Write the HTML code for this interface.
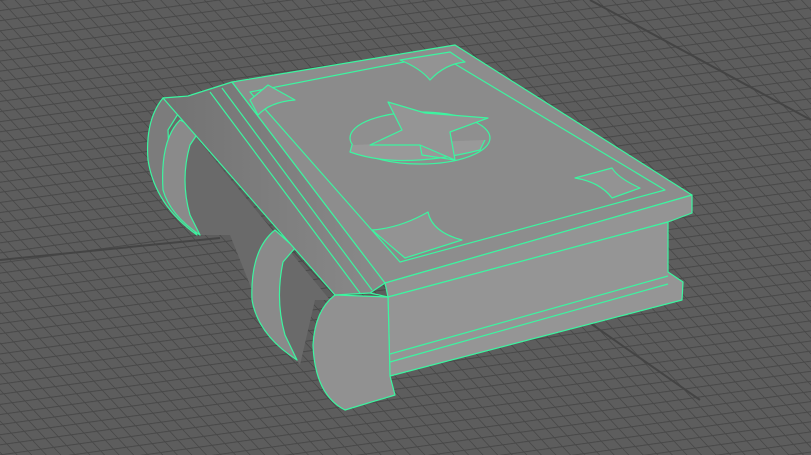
<!DOCTYPE html>
<html><head><style>html,body{margin:0;padding:0;background:#5b5b5b;overflow:hidden}svg{display:block}</style></head>
<body>
<svg width="811" height="455" viewBox="0 0 811 455" xmlns="http://www.w3.org/2000/svg">
<defs>
<pattern id="g" width="13" height="10" patternUnits="userSpaceOnUse" patternTransform="rotate(-8) skewX(35)">
<rect width="13" height="10" fill="#5d5d5d"/>
<path d="M0 0.5H13M0.5 0V10" stroke="#484848" stroke-width="1"/>
</pattern>
<linearGradient id="sp" x1="0" y1="0" x2="1" y2="0"><stop offset="0" stop-color="#727272"/><stop offset="1" stop-color="#8a8a8a"/></linearGradient>
</defs>
<rect width="811" height="455" fill="url(#g)"/>
<line x1="590" y1="0" x2="811" y2="120" stroke="#444" stroke-width="2"/>
<line x1="540" y1="288" x2="700" y2="400" stroke="#444" stroke-width="2"/>
<line x1="0" y1="260" x2="220" y2="238" stroke="#444" stroke-width="2"/>
<g stroke="#3cf5a0" stroke-width="1.2" stroke-linejoin="round">
<path d="M165 100 L190 130 L330 300 L315 300 L300 365 L260 310 L230 235 L200 235 L150 160 Z" fill="#6a6a6a" stroke="none"/>
<path d="M163 98 Q145 120 148 160 Q155 205 197 235 L185 215 L170 180 L168 130 L188 98 Z" fill="#7c7c7c"/>
<path d="M180 120 Q160 140 163 190 Q170 215 200 235 L190 215 Q180 180 190 145 L200 130 Z" fill="#8a8a8a"/>
<path d="M275 230 Q250 250 252 300 Q258 335 297 360 L285 335 Q275 300 283 262 L295 248 Z" fill="#8a8a8a"/>
<path d="M163 98 L188 96 L232 82 L385 283 L370 293 L335 295 Z" fill="url(#sp)"/>
<line x1="210" y1="92" x2="360" y2="293" />
<line x1="222" y1="88" x2="372" y2="290" />
<path d="M232 82 L455 45 L692 195 L385 283 Z" fill="#8d8d8d"/>
<path d="M250 92 L440 55 L665 190 L400 262 Z" fill="#8b8b8b"/>
<path d="M385 283 L692 195 L692 213 L668 222 L388 297 Z" fill="#949494"/>
<path d="M388 297 L668 222 L668 272 L683 282 L682 300 L390 376 Z" fill="#959595"/>
<line x1="390" y1="362" x2="668" y2="284"/>
<line x1="390" y1="354" x2="668" y2="276"/>
<path d="M335 295 L388 297 L390 376 L395 395 L345 410 Q315 395 313 345 Q315 310 335 295 Z" fill="#919191"/>
<line x1="370" y1="293" x2="388" y2="297"/>
<path d="M268 85 L295 100 Q270 102 258 115 L250 100 Z" fill="#939393"/>
<path d="M400 60 Q420 68 430 80 Q445 64 465 62 L450 52 Z" fill="#939393"/>
<path d="M575 178 Q600 182 612 198 L640 188 Q618 178 612 168 Z" fill="#939393"/>
<path d="M372 230 Q400 228 428 212 Q432 232 462 240 L405 258 Z" fill="#939393"/>
<ellipse cx="420" cy="138" rx="70" ry="26" fill="#8f8f8f"/>
<path d="M352 145 L350 152 Q400 170 480 150 L485 140" fill="#999" />
<path d="M388 102 L425 113 L488 118 L450 132 L455 160 L420 145 L370 145 L402 130 Z" fill="#959595"/>
<path d="M420 145 L422 155 L455 160" fill="none"/>
</g>
</svg>
</body></html>
